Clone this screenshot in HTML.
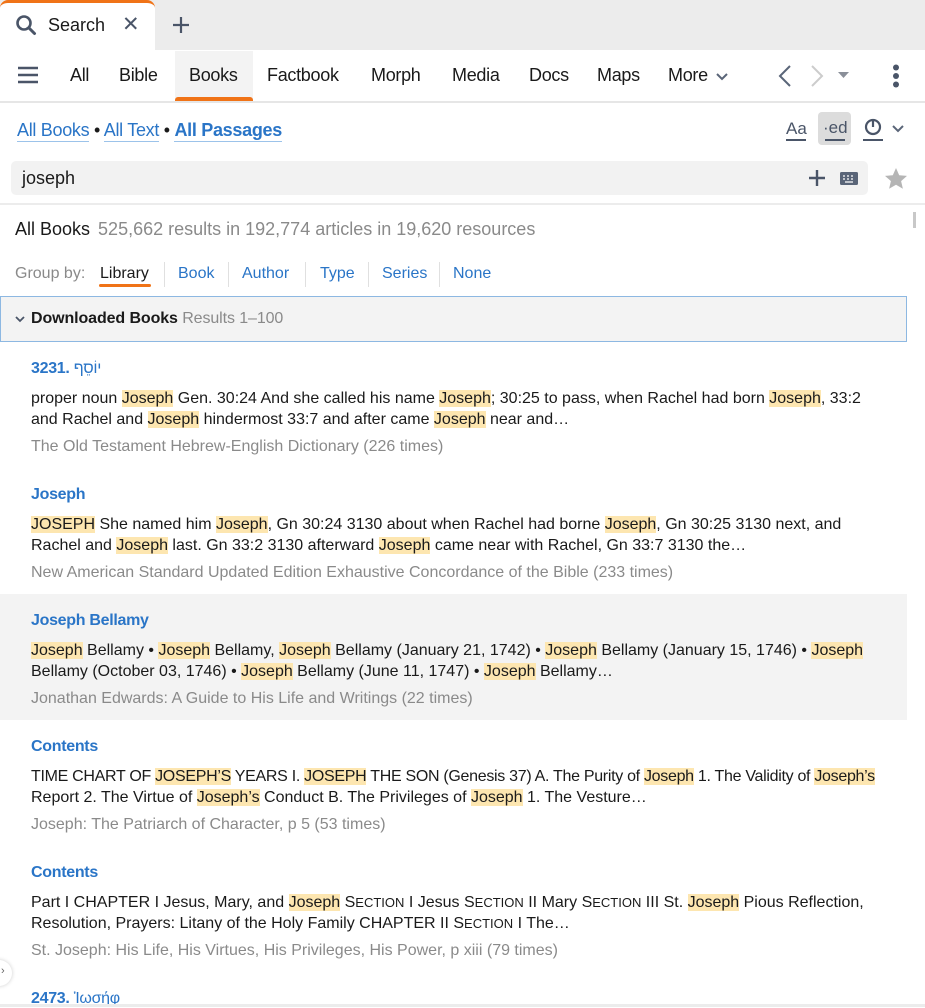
<!DOCTYPE html>
<html><head><meta charset="utf-8"><style>
*{margin:0;padding:0;box-sizing:border-box}
body{width:925px;height:1007px;overflow:hidden;background:#fff;font-family:"Liberation Sans","Noto Sans CJK SC",sans-serif;color:#1a1a1a;position:relative}
.abs{position:absolute;white-space:nowrap}
.tabbar{position:absolute;left:0;top:0;width:925px;height:50px;background:#ececec}
.tab{position:absolute;left:0;top:0;width:155px;height:50px;background:#fff;border-top:3px solid #f07317;border-radius:8px 8px 0 0}
.nav{font-size:18px;top:65px;letter-spacing:-0.3px}
.link{color:#2a75c7}
.ul{border-bottom:1px solid #9cc3ea;padding-bottom:1px}
.hl{background:#fde6b0}
.t{font-size:16px;color:#2a75c7;font-weight:bold;letter-spacing:-0.3px}
.l{font-size:16px;letter-spacing:0;color:#1a1a1a}
.s{font-size:16px;letter-spacing:0;color:#8a8a8a}
.sc{font-size:13px}
</style></head><body>
<div class="tabbar"></div>
<div class="tab"></div>
<svg class="abs" style="left:15px;top:14px" width="22" height="22" viewBox="0 0 22 22"><circle cx="9" cy="9" r="6.5" fill="none" stroke="#4a5568" stroke-width="2.6"/><path d="M14 14l5.5 5.5" stroke="#4a5568" stroke-width="3" stroke-linecap="round"/></svg>
<div class="abs" style="left:48px;top:15px;font-size:18px">Search</div>
<div class="abs" style="left:122px;top:12px;font-size:21px;color:#4a5568">✕</div>
<svg class="abs" style="left:172px;top:16px" width="18" height="18"><path d="M9 1v16M1 9h16" stroke="#4a5568" stroke-width="2.2"/></svg>

<div class="abs" style="left:0;top:101px;width:925px;height:2px;background:#e6e6e6"></div>
<svg class="abs" style="left:18px;top:66px" width="20" height="18"><path d="M0 2h20M0 9h20M0 16h20" stroke="#4a5568" stroke-width="2.4"/></svg>
<div class="abs" style="left:175px;top:51px;width:78px;height:50px;background:#f3f3f3"></div>
<div class="abs" style="left:175px;top:97px;width:78px;height:4px;background:#f07317;border-radius:3px 3px 0 0"></div>
<div class="abs nav" style="left:70px">All</div>
<div class="abs nav" style="left:119px">Bible</div>
<div class="abs nav" style="left:189px">Books</div>
<div class="abs nav" style="left:267px">Factbook</div>
<div class="abs nav" style="left:371px">Morph</div>
<div class="abs nav" style="left:452px">Media</div>
<div class="abs nav" style="left:529px">Docs</div>
<div class="abs nav" style="left:597px">Maps</div>
<div class="abs nav" style="left:668px">More</div>
<svg class="abs" style="left:716px;top:73px" width="12" height="8"><path d="M1 1l5 5 5-5" fill="none" stroke="#5a6578" stroke-width="2"/></svg>
<svg class="abs" style="left:778px;top:65px" width="14" height="22"><path d="M12 1L2 11l10 10" fill="none" stroke="#5a6578" stroke-width="2"/></svg>
<svg class="abs" style="left:810px;top:65px" width="14" height="22"><path d="M2 1l10 10-10 10" fill="none" stroke="#ccc" stroke-width="2"/></svg>
<svg class="abs" style="left:838px;top:72px" width="11" height="7"><path d="M0 0h11L5.5 6z" fill="#8a8f99"/></svg>
<svg class="abs" style="left:892px;top:64px" width="8" height="24"><circle cx="4" cy="3.5" r="3" fill="#4a5568"/><circle cx="4" cy="12" r="3" fill="#4a5568"/><circle cx="4" cy="20.5" r="3" fill="#4a5568"/></svg>

<div class="abs" style="left:17px;top:120px;font-size:18px;letter-spacing:-0.3px"><span class="link ul">All Books</span> • <span class="link ul">All Text</span> • <span class="link ul" style="font-weight:bold">All Passages</span></div>
<div class="abs" style="left:786px;top:119px;font-size:17px;color:#4a5568">Aa</div>
<div class="abs" style="left:786px;top:139px;width:20px;height:2px;background:#4a5568"></div>
<div class="abs" style="left:818px;top:112px;width:33px;height:33px;background:#dcdcdc;border-radius:4px"></div>
<div class="abs" style="left:823px;top:118px;font-size:17px;color:#4a5568">·ed</div>
<div class="abs" style="left:825px;top:139px;width:20px;height:2px;background:#4a5568"></div>
<svg class="abs" style="left:862px;top:118px" width="22" height="24"><circle cx="11" cy="9" r="7" fill="none" stroke="#4a5568" stroke-width="2.2"/><path d="M11 9V2" stroke="#4a5568" stroke-width="2.2"/><path d="M1 22h20" stroke="#4a5568" stroke-width="2"/></svg>
<svg class="abs" style="left:892px;top:125px" width="12" height="8"><path d="M1 1l5 5 5-5" fill="none" stroke="#5a6578" stroke-width="2"/></svg>

<div class="abs" style="left:11px;top:161px;width:857px;height:34px;background:#f2f2f2;border-radius:5px"></div>
<div class="abs" style="left:22px;top:168px;font-size:18px">joseph</div>
<svg class="abs" style="left:808px;top:169px" width="18" height="18"><path d="M9 1v16M1 9h16" stroke="#4a5568" stroke-width="2.4"/></svg>
<svg class="abs" style="left:840px;top:172px" width="18" height="13"><rect x="0" y="0" width="18" height="13" rx="1.5" fill="#5a6578"/><path d="M3 4h2M7 4h2M11 4h2M3 7h2M7 7h2M11 7h2M5 10h8" stroke="#fff" stroke-width="1.2"/></svg>
<svg class="abs" style="left:884px;top:167px" width="24" height="23"><path d="M12 1l3.2 7.2 7.8.7-5.9 5.2 1.8 7.7L12 17.8 5.1 21.8l1.8-7.7L1 8.9l7.8-.7z" fill="#b5b5b5"/></svg>
<div class="abs" style="left:0;top:203px;width:925px;height:2px;background:#ececec"></div>
<div class="abs" style="left:913px;top:212px;width:3px;height:16px;background:#c8c8c8"></div>

<div class="abs" style="left:15px;top:219px;font-size:18px;letter-spacing:0">All Books <span style="color:#8a8a8a;margin-left:3px">525,662 results in 192,774 articles in 19,620 resources</span></div>
<div class="abs" style="left:15px;top:265px;font-size:16px;color:#8a8a8a">Group by:</div>
<div class="abs" style="left:100px;top:265px;font-size:16px;color:#1a1a1a">Library</div>
<div class="abs" style="left:99px;top:284px;width:52px;height:3px;background:#f07317;border-radius:2px"></div>
<div class="abs" style="left:164px;top:262px;width:1px;height:25px;background:#e0e0e0"></div>
<div class="abs link" style="left:178px;top:265px;font-size:16px">Book</div>
<div class="abs" style="left:228px;top:262px;width:1px;height:25px;background:#e0e0e0"></div>
<div class="abs link" style="left:242px;top:265px;font-size:16px">Author</div>
<div class="abs" style="left:305px;top:262px;width:1px;height:25px;background:#e0e0e0"></div>
<div class="abs link" style="left:320px;top:265px;font-size:16px">Type</div>
<div class="abs" style="left:368px;top:262px;width:1px;height:25px;background:#e0e0e0"></div>
<div class="abs link" style="left:382px;top:265px;font-size:16px">Series</div>
<div class="abs" style="left:439px;top:262px;width:1px;height:25px;background:#e0e0e0"></div>
<div class="abs link" style="left:453px;top:265px;font-size:16px">None</div>

<div class="abs" style="left:0;top:296px;width:907px;height:46px;background:#f3f3f3;border:1px solid #8db8e2"></div>
<svg class="abs" style="left:15px;top:316px" width="10" height="7"><path d="M1 1l4 4 4-4" fill="none" stroke="#4a5568" stroke-width="1.8"/></svg>
<div class="abs" style="left:31px;top:310px;font-size:16px;letter-spacing:-0.1px"><b>Downloaded Books</b> <span style="color:#8a8a8a">Results 1–100</span></div>

<div class="abs" style="left:0;top:594px;width:907px;height:126px;background:#f3f3f3"></div>

<div class="abs t" style="left:31px;top:360px">3231. <span style="font-weight:normal">יוֹסֵף</span></div>
<div class="abs l" style="left:31px;top:390px">proper noun <span class="hl">Joseph</span> Gen. 30:24 And she called his name <span class="hl">Joseph</span>; 30:25 to pass, when Rachel had born <span class="hl">Joseph</span>, 33:2</div>
<div class="abs l" style="left:31px;top:411px">and Rachel and <span class="hl">Joseph</span> hindermost 33:7 and after came <span class="hl">Joseph</span> near and…</div>
<div class="abs s" style="left:31px;top:438px">The Old Testament Hebrew-English Dictionary (226 times)</div>

<div class="abs t" style="left:31px;top:486px">Joseph</div>
<div class="abs l" style="left:31px;top:516px"><span class="hl">JOSEPH</span> She named him <span class="hl">Joseph</span>, Gn 30:24 3130 about when Rachel had borne <span class="hl">Joseph</span>, Gn 30:25 3130 next, and</div>
<div class="abs l" style="left:31px;top:537px">Rachel and <span class="hl">Joseph</span> last. Gn 33:2 3130 afterward <span class="hl">Joseph</span> came near with Rachel, Gn 33:7 3130 the…</div>
<div class="abs s" style="left:31px;top:564px">New American Standard Updated Edition Exhaustive Concordance of the Bible (233 times)</div>

<div class="abs t" style="left:31px;top:612px">Joseph Bellamy</div>
<div class="abs l" style="left:31px;top:642px"><span class="hl">Joseph</span> Bellamy • <span class="hl">Joseph</span> Bellamy, <span class="hl">Joseph</span> Bellamy (January 21, 1742) • <span class="hl">Joseph</span> Bellamy (January 15, 1746) • <span class="hl">Joseph</span></div>
<div class="abs l" style="left:31px;top:663px">Bellamy (October 03, 1746) • <span class="hl">Joseph</span> Bellamy (June 11, 1747) • <span class="hl">Joseph</span> Bellamy…</div>
<div class="abs s" style="left:31px;top:690px">Jonathan Edwards: A Guide to His Life and Writings (22 times)</div>

<div class="abs t" style="left:31px;top:738px">Contents</div>
<div class="abs l" style="left:31px;top:768px;letter-spacing:-0.3px">TIME CHART OF <span class="hl">JOSEPH’S</span> YEARS I. <span class="hl">JOSEPH</span> THE SON (Genesis 37) A. The Purity of <span class="hl">Joseph</span> 1. The Validity of <span class="hl">Joseph’s</span></div>
<div class="abs l" style="left:31px;top:789px">Report 2. The Virtue of <span class="hl">Joseph’s</span> Conduct B. The Privileges of <span class="hl">Joseph</span> 1. The Vesture…</div>
<div class="abs s" style="left:31px;top:816px">Joseph: The Patriarch of Character, p 5 (53 times)</div>

<div class="abs t" style="left:31px;top:864px">Contents</div>
<div class="abs l" style="left:31px;top:894px">Part I CHAPTER I Jesus, Mary, and <span class="hl">Joseph</span> S<span class="sc">ECTION</span> I Jesus S<span class="sc">ECTION</span> II Mary S<span class="sc">ECTION</span> III St. <span class="hl">Joseph</span> Pious Reflection,</div>
<div class="abs l" style="left:31px;top:915px">Resolution, Prayers: Litany of the Holy Family CHAPTER II S<span class="sc">ECTION</span> I The…</div>
<div class="abs s" style="left:31px;top:942px">St. Joseph: His Life, His Virtues, His Privileges, His Power, p xiii (79 times)</div>

<div class="abs" style="left:-14px;top:960px;width:26px;height:26px;border-radius:13px;background:#fff;box-shadow:0 0 4px rgba(0,0,0,.2)"></div>
<div class="abs" style="left:1px;top:965px;font-size:11px;color:#666">›</div>
<div class="abs t" style="left:31px;top:990px">2473. <span style="font-weight:normal">Ἰωσήφ</span></div>
<div class="abs" style="left:0;top:1004px;width:925px;height:3px;background:#ececec"></div>
</body></html>
